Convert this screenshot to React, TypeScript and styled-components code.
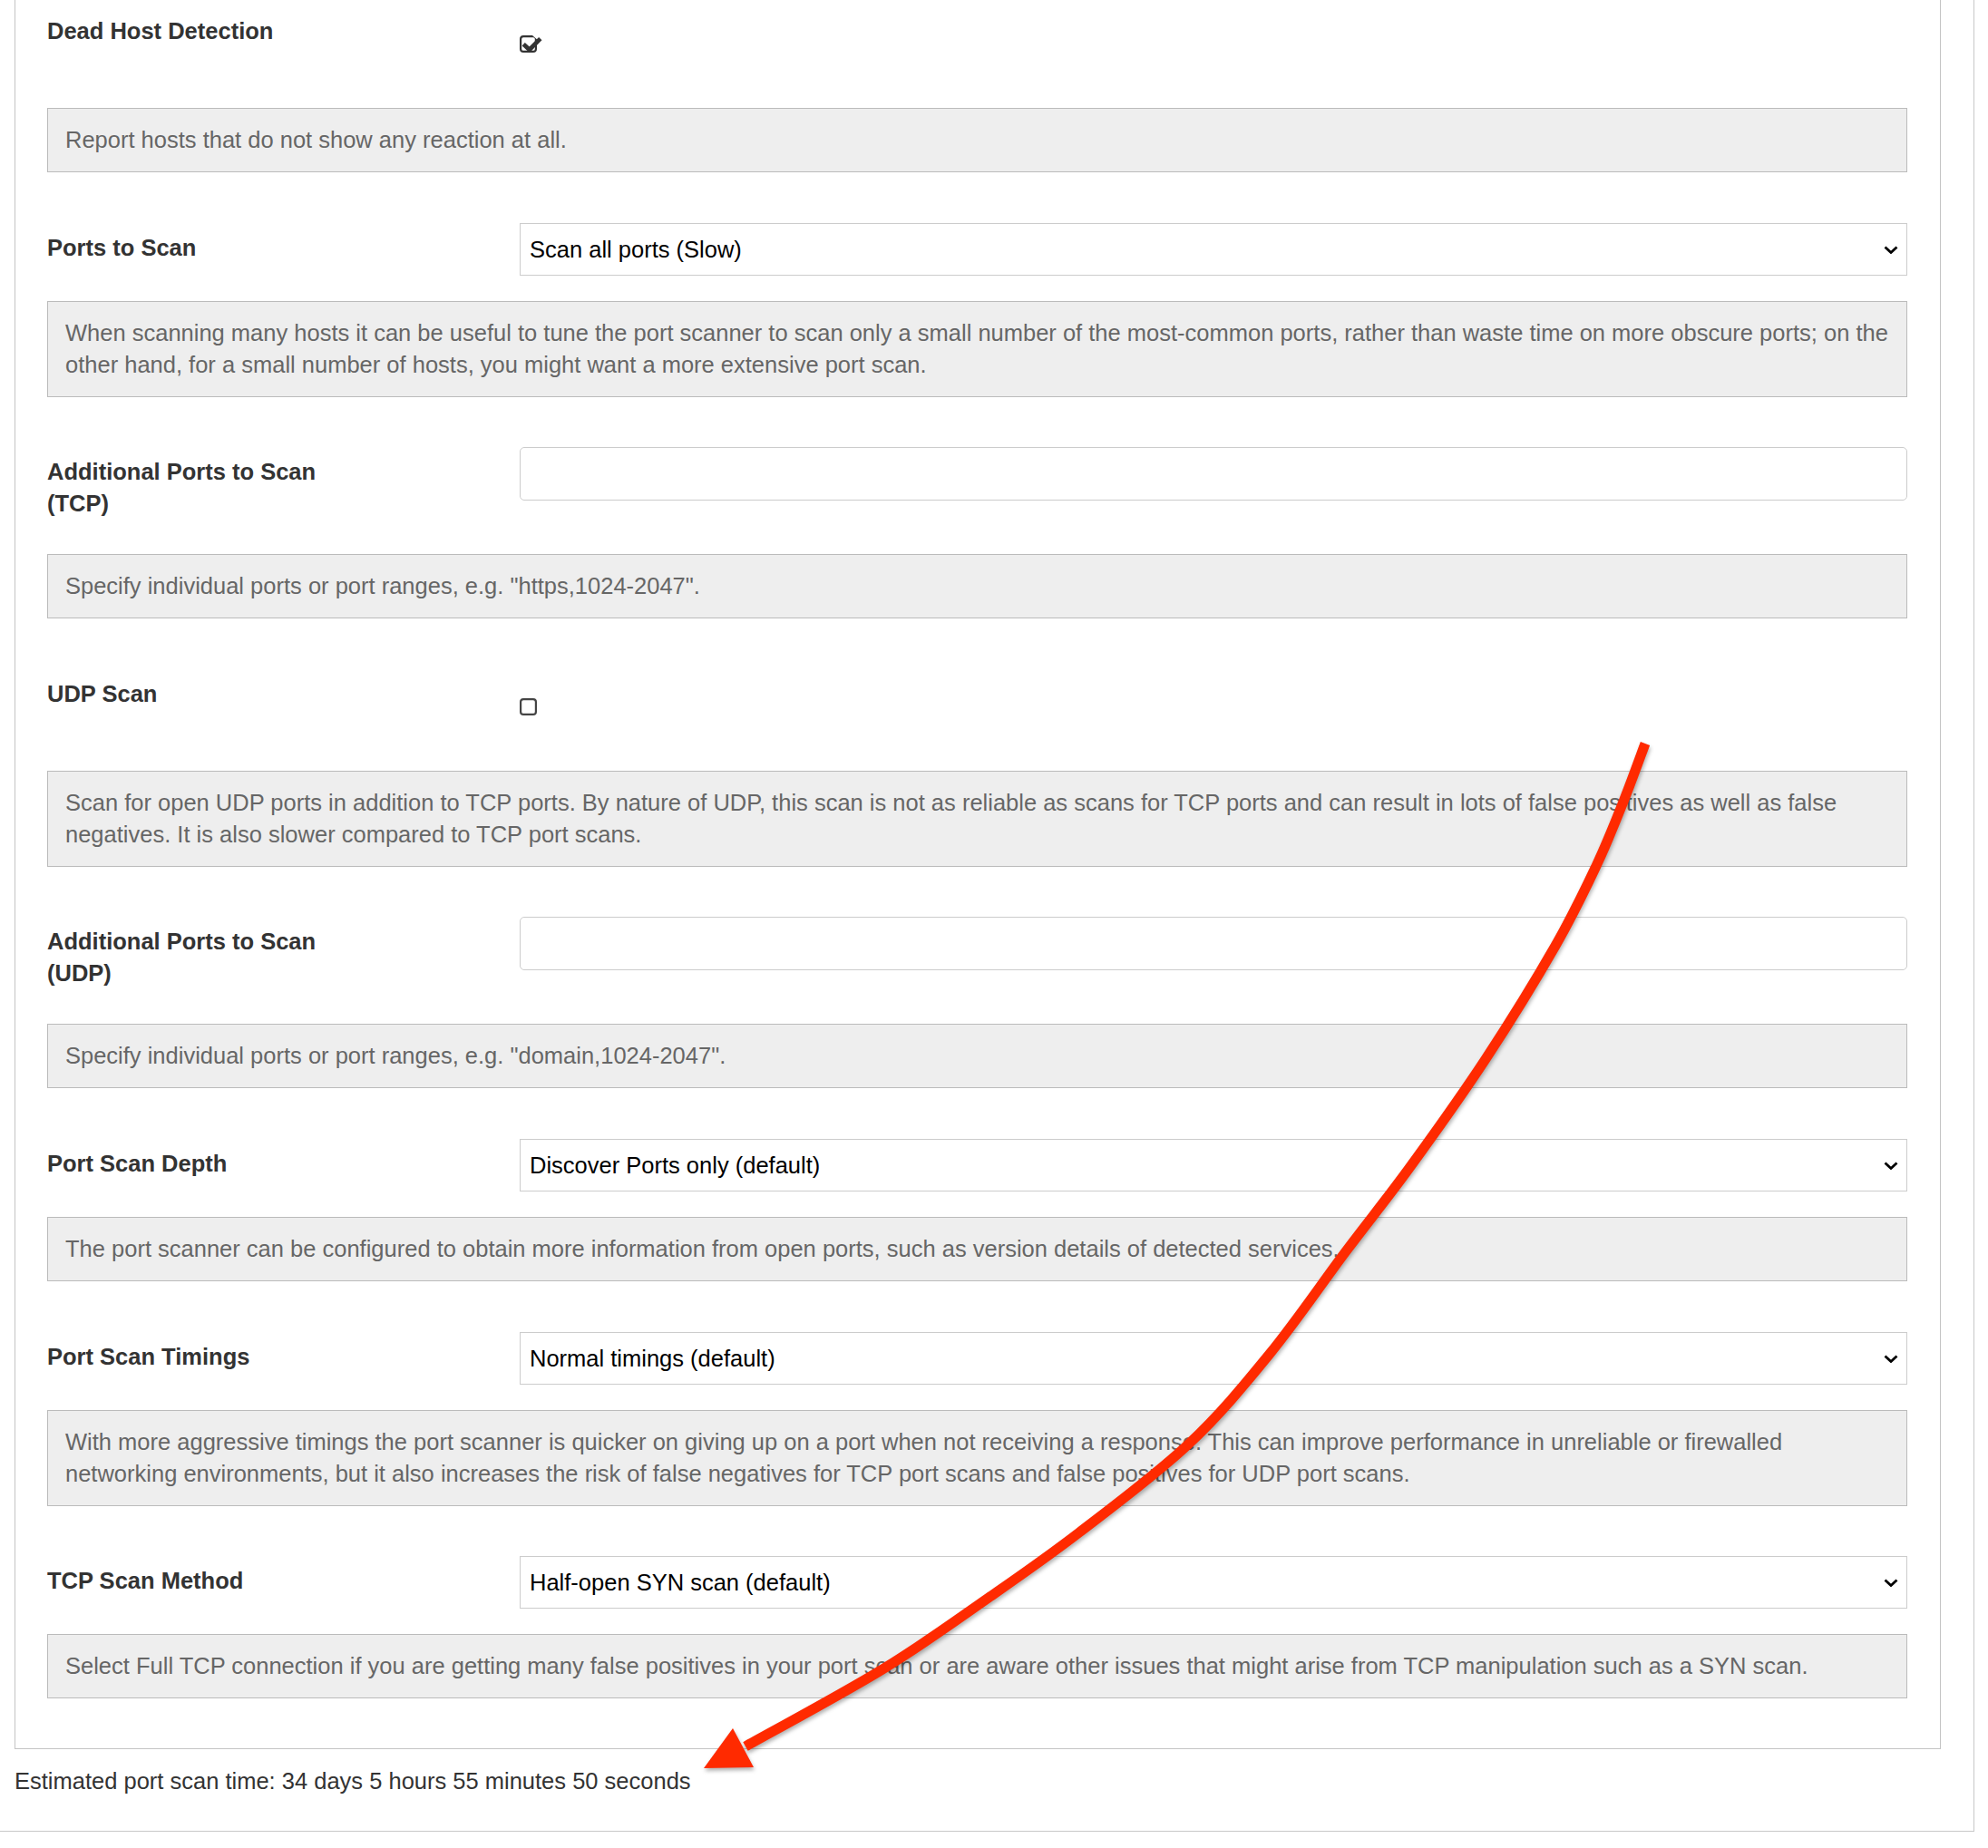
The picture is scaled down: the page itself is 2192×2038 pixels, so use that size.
import React from 'react';
import styled, { createGlobalStyle } from 'styled-components';

const GlobalStyle = createGlobalStyle`
  html, body {
    margin: 0;
    padding: 0;
    background: #ffffff;
  }

  body {
    font-family: 'Liberation Sans', Arial, Helvetica, sans-serif;
    font-size: 25.5px;
    line-height: 35px;
    color: #333333;
  }

  * {
    box-sizing: border-box;
  }
`;

const Stage = styled.div`
  position: relative;
  width: 2192px;
  min-height: 2038px;
`;

const Page = styled.div`
  width: 2177px;
  padding: 0 36px 0 13px;
  border-right: 1px solid #c8c8c8;
  border-bottom: 1px solid #c8c8c8;
`;

const Panel = styled.section`
  margin-left: 3px;
  padding: 7px 36px 55px 35px;
  border: 1px solid #c4c4c4;
  border-top: none;
  display: flex;
  flex-direction: column;
  gap: 55.6px;
`;

const Field = styled.div`
  display: flex;
  flex-direction: column;
  gap: 28px;
`;

const Row = styled.div`
  display: grid;
  grid-template-columns: 521px 1fr;
  align-items: start;
`;

const Label = styled.label`
  display: block;
  max-width: 340px;
  padding: 10px 0;
  font-weight: bold;
  color: #333333;
  line-height: 35px;
`;

const Help = styled.div`
  background: #eeeeee;
  border: 1px solid #bbbbbb;
  color: #666666;
  padding: 17px 12px 17px 19px;
  line-height: 35px;
`;

const SelectWrap = styled.div`
  position: relative;
  height: 58px;
`;

const Select = styled.select`
  appearance: none;
  -webkit-appearance: none;
  width: 100%;
  height: 58px;
  margin: 0;
  padding: 0 40px 0 10px;
  border: 1px solid #cccccc;
  border-radius: 0;
  background: #ffffff;
  color: #000000;
  font-family: inherit;
  font-size: 25.5px;
  outline: none;
`;

const Chevron = styled.svg`
  position: absolute;
  right: 10px;
  top: 25px;
  width: 16px;
  height: 9px;
  pointer-events: none;
`;

const TextInput = styled.input`
  display: block;
  width: 100%;
  height: 59px;
  margin: 0;
  padding: 0 10px;
  border: 1px solid #cccccc;
  border-radius: 5px;
  background: #ffffff;
  font-family: inherit;
  font-size: 25.5px;
  outline: none;
`;

const CheckCell = styled.div`
  height: 84px;
  padding-top: 31px;
`;

const CheckIcon = styled.svg`
  display: block;
  width: 26px;
  height: 22px;
`;

const Footer = styled.p`
  margin: 0;
  padding: 18px 0 37px 3px;
  color: #333333;
  line-height: 35px;
`;

const ArrowLayer = styled.svg`
  position: absolute;
  left: 0;
  top: 0;
  width: 2192px;
  height: 2038px;
  pointer-events: none;
  filter: drop-shadow(1px 3px 2px rgba(0, 0, 0, 0.3));
`;

interface SelectFieldProps {
  label: string;
  value: string;
  help: string;
}

const DropDown: React.FC<{ value: string }> = ({ value }) => (
  <SelectWrap>
    <Select defaultValue={value}>
      <option>{value}</option>
    </Select>
    <Chevron viewBox="0 0 16 9">
      <path d="M1.5 1.5 L8 7.5 L14.5 1.5" fill="none" stroke="#000" strokeWidth="2.8" />
    </Chevron>
  </SelectWrap>
);

const SelectField: React.FC<SelectFieldProps> = ({ label, value, help }) => (
  <Field>
    <Row>
      <Label>{label}</Label>
      <DropDown value={value} />
    </Row>
    <Help>{help}</Help>
  </Field>
);

const InputField: React.FC<{ label: string; help: string }> = ({ label, help }) => (
  <Field>
    <Row>
      <Label>{label}</Label>
      <TextInput type="text" />
    </Row>
    <Help>{help}</Help>
  </Field>
);

const CheckBox: React.FC<{ checked?: boolean }> = ({ checked }) => (
  <CheckIcon viewBox="0 0 26 22">
    <rect
      x="1.1"
      y="2.1"
      width="16.8"
      height="16.8"
      rx="3"
      fill="none"
      stroke={checked ? '#333' : '#444'}
      strokeWidth="2.2"
    />
    {checked && (
      <>
        <path d="M14 1 L22 1 L22 8 Z" fill="#fff" />
        <path
          d="M4.2 10.8 L10.8 16.8 L22.8 4.6"
          fill="none"
          stroke="#333"
          strokeWidth="4.8"
          strokeLinejoin="miter"
        />
      </>
    )}
  </CheckIcon>
);

const CheckField: React.FC<{ label: string; help: string; checked?: boolean }> = ({
  label,
  help,
  checked,
}) => (
  <Field>
    <Row>
      <Label>{label}</Label>
      <CheckCell>
        <CheckBox checked={checked} />
      </CheckCell>
    </Row>
    <Help>{help}</Help>
  </Field>
);

// annotation arrow, traced from the screenshot
const arrowPoints: [number, number][] = [
  [1814, 820],
  [1790, 884],
  [1760, 955],
  [1715, 1043],
  [1638, 1168],
  [1554, 1288],
  [1484, 1380],
  [1400, 1493],
  [1310, 1593],
  [1190, 1690],
  [1090, 1762],
  [973, 1841],
  [822, 1926],
];

const smoothPath = (pts: [number, number][]) => {
  let d = `M ${pts[0][0]} ${pts[0][1]}`;
  for (let i = 0; i < pts.length - 1; i++) {
    const p0 = pts[i - 1] || pts[i];
    const p1 = pts[i];
    const p2 = pts[i + 1];
    const p3 = pts[i + 2] || p2;
    const c1x = p1[0] + (p2[0] - p0[0]) / 6;
    const c1y = p1[1] + (p2[1] - p0[1]) / 6;
    const c2x = p2[0] - (p3[0] - p1[0]) / 6;
    const c2y = p2[1] - (p3[1] - p1[1]) / 6;
    d += ` C ${c1x.toFixed(1)} ${c1y.toFixed(1)} ${c2x.toFixed(1)} ${c2y.toFixed(1)} ${p2[0]} ${p2[1]}`;
  }
  return d;
};

const Arrow: React.FC = () => (
  <ArrowLayer viewBox="0 0 2192 2038">
    <path d={smoothPath(arrowPoints)} fill="none" stroke="#ff2a00" strokeWidth="11" />
    <polygon points="808,1906 776,1950 831,1949" fill="#ff2a00" />
  </ArrowLayer>
);

const App: React.FC = () => (
  <Stage>
    <GlobalStyle />
    <Page>
      <Panel>
        <CheckField
          label="Dead Host Detection"
          checked
          help="Report hosts that do not show any reaction at all."
        />
        <SelectField
          label="Ports to Scan"
          value="Scan all ports (Slow)"
          help="When scanning many hosts it can be useful to tune the port scanner to scan only a small number of the most-common ports, rather than waste time on more obscure ports; on the other hand, for a small number of hosts, you might want a more extensive port scan."
        />
        <InputField
          label="Additional Ports to Scan (TCP)"
          help={'Specify individual ports or port ranges, e.g. "https,1024-2047".'}
        />
        <CheckField
          label="UDP Scan"
          help="Scan for open UDP ports in addition to TCP ports. By nature of UDP, this scan is not as reliable as scans for TCP ports and can result in lots of false positives as well as false negatives. It is also slower compared to TCP port scans."
        />
        <InputField
          label="Additional Ports to Scan (UDP)"
          help={'Specify individual ports or port ranges, e.g. "domain,1024-2047".'}
        />
        <SelectField
          label="Port Scan Depth"
          value="Discover Ports only (default)"
          help="The port scanner can be configured to obtain more information from open ports, such as version details of detected services."
        />
        <SelectField
          label="Port Scan Timings"
          value="Normal timings (default)"
          help="With more aggressive timings the port scanner is quicker on giving up on a port when not receiving a response. This can improve performance in unreliable or firewalled networking environments, but it also increases the risk of false negatives for TCP port scans and false positives for UDP port scans."
        />
        <SelectField
          label="TCP Scan Method"
          value="Half-open SYN scan (default)"
          help="Select Full TCP connection if you are getting many false positives in your port scan or are aware other issues that might arise from TCP manipulation such as a SYN scan."
        />
      </Panel>
      <Footer>Estimated port scan time: 34 days 5 hours 55 minutes 50 seconds</Footer>
    </Page>
    <Arrow />
  </Stage>
);

export default App;
